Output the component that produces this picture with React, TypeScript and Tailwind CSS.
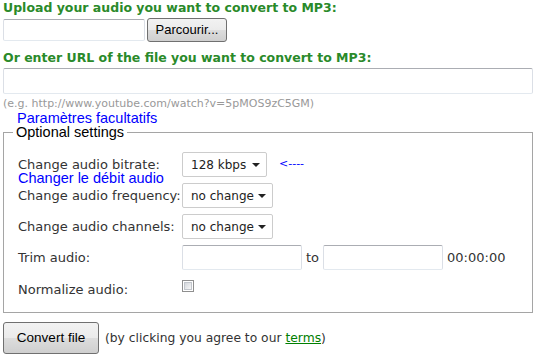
const INPUT =
  "border border-[#e3e9ef] border-t-[#abadb3] border-l-[#dbdfe6] border-r-[#dbdfe6] bg-white rounded-[2px]";
const BTN =
  "rounded-[3px] border border-[#707070] bg-[linear-gradient(#f2f2f2_0%,#ebebeb_50%,#dddddd_50%,#cfcfcf_100%)] font-['Liberation_Sans',Arial,sans-serif] text-black";

function Select({ value, w }: { value: string; w: string }) {
  return (
    <div
      className={`flex h-[25px] items-center justify-between rounded-[2px] border border-[#cccccc] bg-white pl-[8px] pr-[6px] text-[12px] text-[#222] ${w}`}
    >
      <span>{value}</span>
      <svg width="8" height="4" viewBox="0 0 8 4">
        <path d="M0 0H8L4 4Z" fill="#222" />
      </svg>
    </div>
  );
}

export default function App() {
  return (
    <div className="h-[356px] w-[535px] overflow-hidden bg-white font-['DejaVu_Sans',Verdana,sans-serif] text-[13px] text-[#333]">
      <div className="ml-[3px] w-[530px]">
        <h2 className="text-[12.5px] font-bold leading-[16px] text-[#2a8a2a]">
          Upload your audio you want to convert to MP3:
        </h2>
        <div className="mt-[2px] flex h-[24px] items-center gap-[2px]">
          <div className={`${INPUT} h-[22px] w-[142px]`} />
          <button className={`${BTN} h-[24px] w-[80px] text-[13px]`}>Parcourir...</button>
        </div>
        <h2 className="mt-[8px] text-[12.5px] font-bold leading-[16px] text-[#2a8a2a]">
          Or enter URL of the file you want to convert to MP3:
        </h2>
        <div className={`${INPUT} mt-[2px] h-[26px] w-full`} />
        <p className="mt-[4px] text-[11px] leading-[12px] text-[#999]">
          (e.g. http://www.youtube.com/watch?v=5pMOS9zC5GM)
        </p>
        <p className="mt-[2px] pl-[14px] font-['Liberation_Sans',Arial,sans-serif] text-[14.5px] leading-[12px] text-[#0000ff]">
          Paramètres facultatifs
        </p>
        <fieldset className="border border-[#a5a5a5] pb-[11px] pl-[9px] pt-[12px]">
          <legend className="px-[3px] font-['Liberation_Sans',Arial,sans-serif] text-[14.5px] leading-[16px] text-black">
            Optional settings
          </legend>
          <div className="ml-[5px] flex flex-col gap-[6px]">
            <div className="flex h-[25px] items-start">
              <div className="w-[164px] pt-[5px]">
                <div className="leading-[15px]">Change audio bitrate:</div>
                <div className="font-['Liberation_Sans',Arial,sans-serif] text-[14.5px] leading-[13px] text-[#0000ff]">
                  Changer le débit audio
                </div>
              </div>
              <Select value="128 kbps" w="w-[85px]" />
              <span className="ml-[12px] mt-[5px] text-[11px] leading-[14px] text-[#0000ff]">&lt;----</span>
            </div>
            <div className="flex h-[25px] items-center">
              <div className="w-[164px]">Change audio frequency:</div>
              <Select value="no change" w="w-[91px]" />
            </div>
            <div className="flex h-[25px] items-center">
              <div className="w-[164px]">Change audio channels:</div>
              <Select value="no change" w="w-[91px]" />
            </div>
            <div className="flex h-[25px] items-center">
              <div className="w-[164px]">Trim audio:</div>
              <div className={`${INPUT} h-[25px] w-[120px]`} />
              <span className="ml-[4px] mr-[4px]">to</span>
              <div className={`${INPUT} h-[25px] w-[120px]`} />
              <span className="ml-[4px]">00:00:00</span>
            </div>
            <div className="flex h-[25px] items-start">
              <div className="w-[164px] pt-[6px] leading-[16px]">Normalize audio:</div>
              <div className="mt-[4px] h-[12px] w-[12px] border border-[#8f8f8f] bg-white p-[1px]">
                <div className="h-full w-full border border-[#c2c6cc] bg-[linear-gradient(135deg,#d4d7dc,#f7f7f7)]" />
              </div>
            </div>
          </div>
        </fieldset>
        <div className="mt-[9px] flex items-center">
          <button className={`${BTN} h-[32px] w-[96px] text-[13.5px]`}>Convert file</button>
          <span className="ml-[6px] text-[12.3px]">
            (by clicking you agree to our{" "}
            <a className="text-[#008000] underline">terms</a>)
          </span>
        </div>
      </div>
    </div>
  );
}
